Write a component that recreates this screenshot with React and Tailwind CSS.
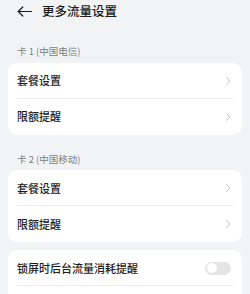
import React from "react";

const font = { fontFamily: '"Noto Sans CJK SC", "Noto Sans", sans-serif' };

function Chevron() {
  return (
    <svg width="6" height="10" viewBox="0 0 6 10" fill="none" className="shrink-0">
      <path d="M1.5 1.5 L4.8 5 L1.5 8.5" stroke="#bdbdbd" strokeWidth="0.9" strokeLinecap="round" strokeLinejoin="round" />
    </svg>
  );
}

function Row({ label, last, right }) {
  return (
    <div className="relative flex items-center justify-between h-9 pl-[9px] pr-[11px]">
      <span className="text-[11px] font-medium text-[#1c1c1c] leading-none">{label}</span>
      {right === undefined ? <Chevron /> : right}
      {!last && <div className="absolute left-[9px] right-[9px] bottom-0 h-px bg-[#ececec]" />}
    </div>
  );
}

function Section({ title, children }) {
  return (
    <>
      <div className="h-[35.5px] flex items-end pb-[6px] pl-[17px] text-[9.5px] text-[#808080] leading-none">
        {title}
      </div>
      <div className="mx-2 bg-white rounded-[9px]">{children}</div>
    </>
  );
}

export default function App() {
  return (
    <div className="w-[250px] h-[294px] bg-[#f1f3f5] overflow-hidden" style={font}>
      <div className="h-[27px] flex items-start pt-[4px] pl-[17px]">
        <div className="flex items-center h-[14px] gap-[10px]">
          <svg width="15" height="11" viewBox="0 0 15 11" fill="none">
            <path
              d="M14.5 5.5 H1.2 M5.8 1 L1.2 5.5 L5.8 10"
              stroke="#1c1c1c"
              strokeWidth="1.2"
              strokeLinecap="round"
              strokeLinejoin="round"
            />
          </svg>
          <span className="text-[12.5px] font-medium text-[#1c1c1c] leading-none">更多流量设置</span>
        </div>
      </div>

      <Section title="卡 1 (中国电信)">
        <Row label="套餐设置" />
        <Row label="限额提醒" last />
      </Section>

      <Section title="卡 2 (中国移动)">
        <Row label="套餐设置" />
        <Row label="限额提醒" last />
      </Section>

      <div className="mx-2 mt-2 bg-white rounded-[9px]">
        <Row
          label="锁屏时后台流量消耗提醒"
          right={
            <div className="w-[26px] h-[13px] rounded-full bg-[#e3e4e6] p-[1.5px] flex items-center">
              <div className="w-[10px] h-[10px] rounded-full bg-white" />
            </div>
          }
        />
        <Row label="" right={null} last />
      </div>
    </div>
  );
}
